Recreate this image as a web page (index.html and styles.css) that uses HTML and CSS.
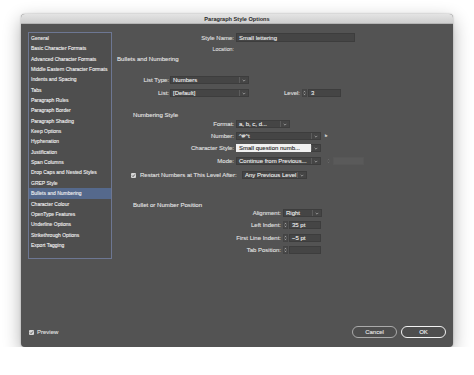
FILE: index.html
```html
<!DOCTYPE html>
<html>
<head>
<meta charset="utf-8">
<link rel="stylesheet" href="styles.css">
</head>
<body>
<div class="window">
  <div class="titlebar">Paragraph Style Options</div>
  <div class="content">
    <ul class="sidebar">
      <li>General</li>
      <li>Basic Character Formats</li>
      <li>Advanced Character Formats</li>
      <li>Middle Eastern Character Formats</li>
      <li>Indents and Spacing</li>
      <li>Tabs</li>
      <li>Paragraph Rules</li>
      <li>Paragraph Border</li>
      <li>Paragraph Shading</li>
      <li>Keep Options</li>
      <li>Hyphenation</li>
      <li>Justification</li>
      <li>Span Columns</li>
      <li>Drop Caps and Nested Styles</li>
      <li>GREP Style</li>
      <li class="selected">Bullets and Numbering</li>
      <li>Character Colour</li>
      <li>OpenType Features</li>
      <li>Underline Options</li>
      <li>Strikethrough Options</li>
      <li>Export Tagging</li>
    </ul>
    <div class="main">
      <div class="row r-stylename">
        <span class="label lw-top">Style Name:</span>
        <span class="field w-name">Small lettering</span>
      </div>
      <div class="row r-location">
        <span class="label lw-top">Location:</span>
      </div>
      <div class="row heading r-h1">Bullets and Numbering</div>

      <div class="row r-listtype">
        <span class="label lw-list">List Type:</span>
        <span class="select w-list"><span class="sel-text">Numbers</span><span class="chev"><svg viewBox="0 0 6 4"><path d="M1 1l2 2 2-2"/></svg></span></span>
      </div>
      <div class="row r-list">
        <span class="label lw-list">List:</span>
        <span class="select w-list"><span class="sel-text">[Default]</span><span class="chev"><svg viewBox="0 0 6 4"><path d="M1 1l2 2 2-2"/></svg></span></span>
        <span class="label lw-level">Level:</span>
        <span class="stepper"><svg viewBox="0 0 4 8"><path d="M1 3l1-1.2 1 1.2M1 5l1 1.2 1-1.2"/></svg></span>
        <span class="field w-level">3</span>
      </div>

      <div class="row heading sub r-h2">Numbering Style</div>
      <div class="row r-format">
        <span class="label lw-top">Format:</span>
        <span class="select w-format"><span class="sel-text">a, b, c, d...</span><span class="chev"><svg viewBox="0 0 6 4"><path d="M1 1l2 2 2-2"/></svg></span></span>
      </div>
      <div class="row r-number">
        <span class="label lw-top">Number:</span>
        <span class="select w-num"><span class="sel-text">^#^t</span><span class="chev"><svg viewBox="0 0 6 4"><path d="M1 1l2 2 2-2"/></svg></span></span>
        <span class="flyout">▸</span>
      </div>
      <div class="row r-charstyle">
        <span class="label lw-top">Character Style:</span>
        <span class="select w-num"><span class="sel-text light">Small question numb...</span><span class="chev"><svg viewBox="0 0 6 4"><path d="M1 1l2 2 2-2"/></svg></span></span>
      </div>
      <div class="row r-mode">
        <span class="label lw-top">Mode:</span>
        <span class="select w-num"><span class="sel-text">Continue from Previous...</span><span class="chev"><svg viewBox="0 0 6 4"><path d="M1 1l2 2 2-2"/></svg></span></span>
        <span class="stepper disabled"><svg viewBox="0 0 4 8"><path d="M1 3l1-1.2 1 1.2M1 5l1 1.2 1-1.2"/></svg></span>
        <span class="field disabled w-mode"></span>
      </div>
      <div class="row r-restart">
        <span class="checkbox"><svg viewBox="0 0 6 6"><path d="M1.3 3.1l1.2 1.2 2.2-2.6"/></svg></span>
        <span class="cb-label restart-label">Restart Numbers at This Level After:</span>
        <span class="select w-restart"><span class="sel-text">Any Previous Level</span><span class="chev"><svg viewBox="0 0 6 4"><path d="M1 1l2 2 2-2"/></svg></span></span>
      </div>

      <div class="row heading sub r-h3">Bullet or Number Position</div>
      <div class="row r-align">
        <span class="label lw-pos">Alignment:</span>
        <span class="select w-align"><span class="sel-text">Right</span><span class="chev"><svg viewBox="0 0 6 4"><path d="M1 1l2 2 2-2"/></svg></span></span>
      </div>
      <div class="row r-left">
        <span class="label lw-pos">Left Indent:</span>
        <span class="stepper"><svg viewBox="0 0 4 8"><path d="M1 3l1-1.2 1 1.2M1 5l1 1.2 1-1.2"/></svg></span>
        <span class="field w-indent">35 pt</span>
      </div>
      <div class="row r-first">
        <span class="label lw-pos">First Line Indent:</span>
        <span class="stepper"><svg viewBox="0 0 4 8"><path d="M1 3l1-1.2 1 1.2M1 5l1 1.2 1-1.2"/></svg></span>
        <span class="field w-indent">−5 pt</span>
      </div>
      <div class="row r-tab">
        <span class="label lw-pos">Tab Position:</span>
        <span class="stepper"><svg viewBox="0 0 4 8"><path d="M1 3l1-1.2 1 1.2M1 5l1 1.2 1-1.2"/></svg></span>
        <span class="field w-indent"></span>
      </div>
    </div>
  </div>
  <div class="footer">
    <span class="checkbox"><svg viewBox="0 0 6 6"><path d="M1.3 3.1l1.2 1.2 2.2-2.6"/></svg></span>
    <span class="cb-label">Preview</span>
    <span class="spacer"></span>
    <span class="button">Cancel</span>
    <span class="button default">OK</span>
  </div>
</div>
</body>
</html>
```
FILE: styles.css
```css
html, body {
  margin: 0;
  padding: 0;
  background: #ffffff;
}
body {
  font-family: "Liberation Sans", Arial, sans-serif;
  padding-top: 14px;
  padding-left: 21px;
}
.window {
  width: 432px;
  height: 333px;
  background: #535353;
  border-radius: 4px;
  box-shadow: 0 6px 18px rgba(0, 0, 0, 0.32), 0 0 2px rgba(0, 0, 0, 0.3);
  display: flex;
  flex-direction: column;
  overflow: hidden;
}
.titlebar {
  height: 10px;
  flex: none;
  background: linear-gradient(#e4e4e4, #cfcfcf);
  border-bottom: 1px solid #b5b5b5;
  box-sizing: border-box;
  color: #2a2a2a;
  font-size: 5.6px;
  font-weight: bold;
  line-height: 10px;
  text-align: center;
}
.content {
  flex: 1;
  display: flex;
  min-height: 0;
}
.sidebar {
  list-style: none;
  margin: 8px 0 0 7px;
  padding: 0;
  width: 84px;
  height: 227px;
  box-sizing: border-box;
  border: 1px solid #6d7793;
  background: #4e4e4e;
  flex: none;
}
.sidebar li {
  height: 10.35px;
  line-height: 10.35px;
  padding-left: 2px;
  font-size: 5px;
  color: #f2f2f2;
  -webkit-text-stroke: 0.1px #f2f2f2;
  white-space: nowrap;
  overflow: hidden;
}
.sidebar li.selected {
  background: #55698c;
}
.main {
  margin-left: 5px;
  display: flex;
  flex-direction: column;
  flex: 1;
}
.row {
  display: flex;
  align-items: center;
  height: 8px;
  font-size: 6px;
  color: #e0e0e0;
  -webkit-text-stroke: 0.1px #e0e0e0;
  white-space: nowrap;
}
.heading {
  font-size: 6.1px;
  color: #e8e8e8;
}
.heading.sub {
  padding-left: 16px;
}
.label {
  text-align: right;
  flex: none;
  margin-right: 2px;
  box-sizing: border-box;
}
.lw-top { width: 117px; }
.lw-list { width: 52px; margin-right: 1px; }
.lw-level { width: 51px; margin-right: 2px; }
.lw-pos { width: 164px; margin-right: 2px; }

.r-stylename { margin-top: 9px; height: 9px; }
.r-location { margin-top: 3px; }
.r-location .label { font-size: 5.3px; color: #d2d2d2; }
.r-h1 { margin-top: 1px; }
.r-listtype { margin-top: 14px; }
.r-list { margin-top: 5px; }
.r-h2 { margin-top: 13px; }
.r-format { margin-top: 2px; }
.r-number { margin-top: 4px; }
.r-charstyle { margin-top: 4px; }
.r-mode { margin-top: 5px; }
.r-restart { margin-top: 6px; padding-left: 14px; }
.r-h3 { margin-top: 21px; }
.r-align { margin-top: 1px; }
.r-left { margin-top: 4px; }
.r-first { margin-top: 5px; }
.r-tab { margin-top: 4px; }

.field {
  height: 100%;
  box-sizing: border-box;
  background: #454545;
  border: 1px solid #3d3d3d;
  color: #f6f6f6;
  padding-left: 2px;
  display: flex;
  align-items: center;
  flex: none;
}
.field.disabled {
  background: #5a5a5a;
  border-color: #575757;
}
.w-name { width: 119px; }
.w-level { width: 33px; }
.w-mode { width: 31px; margin-left: 1px; }
.w-indent { width: 32px; }

.select {
  height: 100%;
  display: flex;
  flex: none;
  box-sizing: border-box;
  background: #454545;
  border: 1px solid #3d3d3d;
  color: #f6f6f6;
}
.sel-text {
  flex: 1;
  padding-left: 2px;
  display: flex;
  align-items: center;
  overflow: hidden;
}
.sel-text.light {
  background: #f1f1f1;
  color: #1f1f1f;
  -webkit-text-stroke: 0.1px #1f1f1f;
  margin: -1px 0 -1px -1px;
  padding-left: 3px;
}
.chev {
  width: 8px;
  flex: none;
  border-left: 1px solid #5c5c5c;
  display: flex;
  align-items: center;
  justify-content: center;
}
.chev svg {
  width: 4px;
  height: 3px;
}
.chev path, .stepper path, .checkbox path {
  fill: none;
  stroke: #d8d8d8;
  stroke-width: 0.8;
}
.w-list { width: 79px; }
.w-format { width: 54px; }
.w-num { width: 85px; }
.w-restart { width: 65px; }
.w-align { width: 39px; }

.stepper {
  width: 5px;
  height: 100%;
  flex: none;
  margin-right: 1px;
  display: flex;
  align-items: center;
  justify-content: center;
  background: #4a4a4a;
  border: 1px solid #444;
  box-sizing: border-box;
}
.stepper svg {
  width: 3px;
  height: 6px;
}
.stepper.disabled {
  margin-left: 5px;
  background: transparent;
  border-color: transparent;
}
.stepper.disabled path { stroke: #7a7a7a; }
.flyout {
  margin-left: 4px;
  font-size: 5px;
  color: #d0d0d0;
  margin-top: -3px;
}
.checkbox {
  width: 5px;
  height: 5px;
  flex: none;
  background: #d6d6d6;
  border-radius: 1px;
  display: flex;
}
.checkbox svg {
  width: 5px;
  height: 5px;
}
.checkbox path { stroke: #333; stroke-width: 0.9; }
.cb-label {
  margin-left: 3px;
  margin-right: 2px;
  color: #e2e2e2;
}
.restart-label {
  width: 100px;
  margin-left: 4px;
  margin-right: 2px;
}
.footer {
  flex: none;
  height: 12px;
  margin: 0 7px 9px 8px;
  display: flex;
  align-items: center;
  font-size: 6px;
  color: #e0e0e0;
  -webkit-text-stroke: 0.1px #e0e0e0;
}
.spacer { flex: 1; }
.button {
  width: 45px;
  height: 12px;
  box-sizing: border-box;
  border: 1px solid #aaaaaa;
  border-radius: 6px;
  display: flex;
  align-items: center;
  justify-content: center;
  color: #e6e6e6;
  background: #4e4e4e;
  margin-left: 4px;
}
.button.default {
  border: 1.3px solid #f2f2f2;
  color: #ffffff;
}
```
